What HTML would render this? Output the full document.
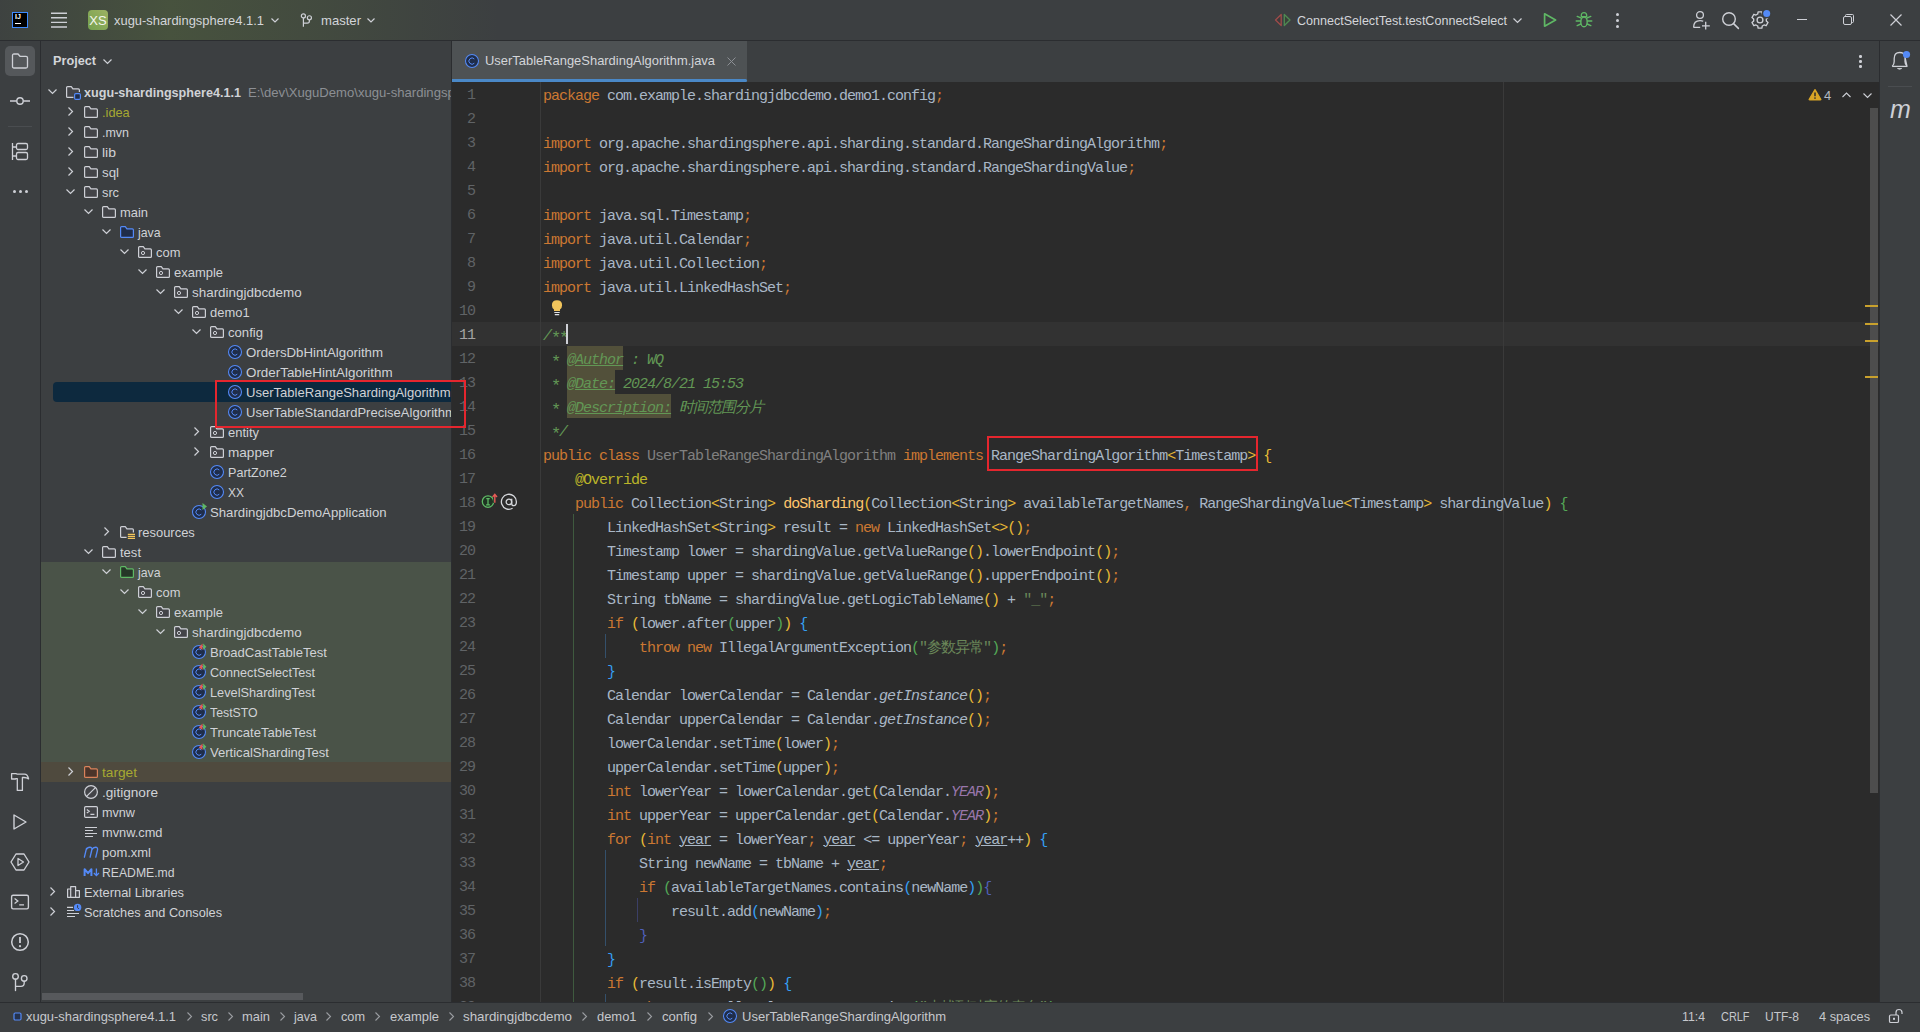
<!DOCTYPE html><html><head><meta charset="utf-8"><style>
*{margin:0;padding:0;box-sizing:border-box}
html,body{width:1920px;height:1032px;overflow:hidden;background:#3C3F41}
body{position:relative;font-family:"Liberation Sans",sans-serif;color:#BBBBBB;font-size:13px}
.a{position:absolute}
.t{position:absolute;white-space:pre;line-height:20px;font-size:13.3px;color:#C6C8CC}
svg{position:absolute;overflow:visible}
.code{position:absolute;left:543px;top:82px;font-family:"Liberation Mono",monospace;font-size:15px;letter-spacing:-1px;line-height:24px;white-space:pre;color:#A9B7C6}
.ln{position:absolute;left:450px;width:25px;text-align:right;font-family:"Liberation Mono",monospace;font-size:15px;letter-spacing:-1px;line-height:24px;color:#606366}
.k{color:#CC7832}.s{color:#6A8759}.d{color:#629755;font-style:italic}
.dt{color:#629755;font-style:italic;text-decoration:underline}
.an{color:#BBB529}.fn{color:#FFC66D}.gr{color:#808080}.st{color:#9876AA;font-style:italic}.it{font-style:italic}
.u{text-decoration:underline}
.ast{color:#629755;position:relative;top:3px;font-size:17px;line-height:0;letter-spacing:-2.2px}
.y{color:#E8BA36}.g{color:#54A857}.b{color:#359FF4}.i{color:#5060BB}
</style></head><body><div class="a" style="left:0;top:0;width:1920px;height:40px;background:linear-gradient(90deg, rgba(110,150,50,0.04) 0px, rgba(110,150,50,0.22) 170px, rgba(110,150,50,0.12) 330px, rgba(110,150,50,0) 500px),#3C3F41"></div>
<div class="a" style="left:0;top:40px;width:1920px;height:1px;background:#2B2D30"></div>
<div class="a" style="left:12px;top:12px;width:16px;height:16px;background:#000;border:1px solid #3D8BFF"></div>
<div class="a" style="left:15px;top:13px;font-size:7px;font-weight:bold;color:#fff;line-height:8px">IJ</div>
<div class="a" style="left:15px;top:23px;width:6px;height:1px;background:#fff"></div>
<svg style="left:51px;top:10px" width="16" height="20"><path d="M0 3.2 H16 M0 7.8 H16 M0 12.4 H16 M0 17 H16" stroke="#CED0D6" stroke-width="1.4"/></svg>
<div class="a" style="left:88px;top:10px;width:20px;height:20px;border-radius:4px;background:linear-gradient(45deg,#74A04F,#9DB262);color:#F4F7EE;font-size:13px;line-height:22px;text-align:center">XS</div>
<div class="a" style="left:114px;top:11px;white-space:pre;font-size:13px;line-height:20px;color:#D3D5D9;transform-origin:0 0;transform:scaleX(0.9931);">xugu-shardingsphere4.1.1</div>
<svg style="left:271px;top:18px" width="8" height="5.0"><path d="M0.5 0.5 L4.0 4.0 L7.5 0.5" fill="none" stroke="#CED0D6" stroke-width="1.2"/></svg>
<svg style="left:296px;top:10px" width="20" height="20"><circle cx="7.4" cy="5.9" r="2.05" fill="none" stroke="#CED0D6" stroke-width="1.2"/><circle cx="13.4" cy="7.8" r="2.05" fill="none" stroke="#CED0D6" stroke-width="1.2"/><path d="M7.4 8 V16.8 M13.4 9.9 V11 Q13.4 13.2 11.2 13.2 H7.4" fill="none" stroke="#CED0D6" stroke-width="1.2"/></svg>
<div class="a" style="left:321px;top:11px;white-space:pre;font-size:13px;line-height:20px;color:#D3D5D9;transform-origin:0 0;transform:scaleX(1.0068);">master</div>
<svg style="left:367px;top:18px" width="8" height="5.0"><path d="M0.5 0.5 L4.0 4.0 L7.5 0.5" fill="none" stroke="#CED0D6" stroke-width="1.2"/></svg>
<svg style="left:1274px;top:13px" width="18" height="14"><path d="M7.2 1.5 L1.5 7 L7.2 12.5 Z" fill="#3F3A3B" stroke="#9E4B4A" stroke-width="1.3" stroke-linejoin="round"/><path d="M10.3 1.5 L16 7 L10.3 12.5 Z" fill="#394239" stroke="#4F8A52" stroke-width="1.3" stroke-linejoin="round"/></svg>
<div class="a" style="left:1297px;top:11px;white-space:pre;font-size:13px;line-height:20px;color:#D3D5D9;transform-origin:0 0;transform:scaleX(0.9655);">ConnectSelectTest.testConnectSelect</div>
<svg style="left:1513px;top:18px" width="9" height="5.5"><path d="M0.5 0.5 L4.5 4.5 L8.5 0.5" fill="none" stroke="#CED0D6" stroke-width="1.2"/></svg>
<svg style="left:1543px;top:12px" width="14" height="16"><path d="M1.6 1.8 L12.6 8 L1.6 14.2 Z" fill="none" stroke="#5FB865" stroke-width="1.7" stroke-linejoin="round"/></svg>
<svg style="left:1574px;top:10px" width="20" height="20"><path d="M7.3 6.7 V5.6 Q7.3 2.7 10 2.7 Q12.7 2.7 12.7 5.6 V6.7 Z" fill="none" stroke="#5FB865" stroke-width="1.3" stroke-linejoin="round"/><ellipse cx="10" cy="11.9" rx="3.2" ry="4.9" fill="none" stroke="#5FB865" stroke-width="1.4"/><path d="M3.2 6.4 L6.8 7.9 M2.2 11 H6.6 M3.2 15.6 L6.8 14 M16.8 6.4 L13.2 7.9 M17.8 11 H13.4 M16.8 15.6 L13.2 14" fill="none" stroke="#5FB865" stroke-width="1.4" stroke-linecap="round"/></svg>
<div class="a" style="left:1616px;top:13px;width:3px;height:3px;border-radius:50%;background:#CED0D6"></div>
<div class="a" style="left:1616px;top:19px;width:3px;height:3px;border-radius:50%;background:#CED0D6"></div>
<div class="a" style="left:1616px;top:25px;width:3px;height:3px;border-radius:50%;background:#CED0D6"></div>
<svg style="left:1690px;top:9px" width="22" height="22"><circle cx="10" cy="6" r="3.4" fill="none" stroke="#CED0D6" stroke-width="1.3"/><path d="M3.6 18.4 Q3.6 11.6 10 11.6 Q12 11.6 13.2 12.3 M3.6 18.4 H10.2 M15.7 12.8 V20.6 M12 16.9 H19.8" fill="none" stroke="#CED0D6" stroke-width="1.3"/></svg>
<svg style="left:1719px;top:9px" width="22" height="22"><circle cx="10" cy="10" r="6.3" fill="none" stroke="#CED0D6" stroke-width="1.4"/><path d="M14.6 14.6 L19.4 19.4" stroke="#CED0D6" stroke-width="1.5" stroke-linecap="round"/></svg>
<svg style="left:1750px;top:10px" width="22" height="22"><path d="M8.11 1.82 L11.89 1.82 L12.29 4.03 L14.03 5.03 L16.14 4.27 L18.03 7.54 L16.32 9.00 L16.32 11.00 L18.03 12.46 L16.14 15.73 L14.03 14.97 L12.29 15.97 L11.89 18.18 L8.11 18.18 L7.71 15.97 L5.97 14.97 L3.86 15.73 L1.97 12.46 L3.68 11.00 L3.68 9.00 L1.97 7.54 L3.86 4.27 L5.97 5.03 L7.71 4.03 Z" fill="none" stroke="#CED0D6" stroke-width="1.35" stroke-linejoin="round"/><circle cx="10" cy="10" r="2.9" fill="none" stroke="#CED0D6" stroke-width="1.35"/><circle cx="16.7" cy="3.5" r="5" fill="#3C3F41"/><circle cx="16.7" cy="3.5" r="3.5" fill="#548AF7"/></svg>
<div class="a" style="left:1797px;top:19px;width:10px;height:1px;background:#CED0D6"></div>
<svg style="left:1843px;top:14px" width="12" height="12"><rect x="0.5" y="2.5" width="8" height="8" rx="1.5" fill="none" stroke="#CED0D6"/><path d="M2.5 2.5 V1.5 Q2.5 0.5 3.5 0.5 H9.5 Q10.5 0.5 10.5 1.5 V7.5 Q10.5 8.5 9.5 8.5 H8.5" fill="none" stroke="#CED0D6"/></svg>
<svg style="left:1890px;top:14px" width="12" height="12"><path d="M0.5 0.5 L11.5 11.5 M11.5 0.5 L0.5 11.5" stroke="#CED0D6" stroke-width="1.2"/></svg>
<div class="a" style="left:40px;top:41px;width:1px;height:962px;background:#2B2D30"></div>
<div class="a" style="left:5px;top:46px;width:30px;height:30px;border-radius:5px;background:#55585B"></div>
<svg style="left:11px;top:53px" width="18" height="16"><path d="M1.5 2.5 Q1.5 1 3 1 H7 L9 3.3 H15 Q16.5 3.3 16.5 4.8 V13.5 Q16.5 15 15 15 H3 Q1.5 15 1.5 13.5 Z" fill="none" stroke="#CED0D6" stroke-width="1.3"/></svg>
<svg style="left:10px;top:95px" width="20" height="12"><circle cx="10" cy="6" r="3.2" fill="none" stroke="#CED0D6" stroke-width="1.4"/><path d="M0 6 H6.8 M13.2 6 H20" stroke="#CED0D6" stroke-width="1.4"/></svg>
<div class="a" style="left:8px;top:126px;width:24px;height:1px;background:#4A4D50"></div>
<svg style="left:11px;top:142px" width="18" height="20"><path d="M1.5 1 V18 M1.5 5 H5 M1.5 14 H5" fill="none" stroke="#CED0D6" stroke-width="1.3"/><rect x="5.5" y="1.5" width="11" height="6" rx="1.5" fill="none" stroke="#CED0D6" stroke-width="1.3"/><rect x="5.5" y="10.5" width="11" height="7" rx="1.5" fill="none" stroke="#CED0D6" stroke-width="1.3"/></svg>
<div class="a" style="left:13px;top:190px;width:3px;height:3px;border-radius:50%;background:#CED0D6"></div>
<div class="a" style="left:19px;top:190px;width:3px;height:3px;border-radius:50%;background:#CED0D6"></div>
<div class="a" style="left:25px;top:190px;width:3px;height:3px;border-radius:50%;background:#CED0D6"></div>
<svg style="left:10px;top:772px" width="20" height="20"><path d="M1.6 1.6 H5.8 Q6.4 2.1 7.4 2.1 H14.4 Q17.6 2.1 18.6 6.9 Q16.8 5.5 14 5.5 H12.4 V18.4 H7.3 V6.6 H6 Q5.4 7 4.9 7 H1.6 Z" fill="none" stroke="#CED0D6" stroke-width="1.3" stroke-linejoin="round"/></svg>
<svg style="left:12px;top:813px" width="16" height="18"><path d="M2 2 L14 9 L2 16 Z" fill="none" stroke="#CED0D6" stroke-width="1.4" stroke-linejoin="round"/></svg>
<svg style="left:10px;top:853px" width="20" height="18"><path d="M6 1 H14 L19 9 L14 17 H6 L1 9 Z" fill="none" stroke="#CED0D6" stroke-width="1.4" stroke-linejoin="round"/><path d="M8 5.5 L13.5 9 L8 12.5 Z" fill="none" stroke="#CED0D6" stroke-width="1.3" stroke-linejoin="round"/></svg>
<svg style="left:10px;top:894px" width="20" height="16"><rect x="1.6" y="1.2" width="16.8" height="13.6" rx="1.5" fill="none" stroke="#CED0D6" stroke-width="1.35"/><path d="M4.6 4.6 L7.8 7 L4.6 9.4 M9.2 10.8 H14" fill="none" stroke="#CED0D6" stroke-width="1.3"/></svg>
<svg style="left:10px;top:932px" width="20" height="20"><circle cx="10" cy="10" r="8.3" fill="none" stroke="#CED0D6" stroke-width="1.5"/><path d="M10 5 V11" stroke="#CED0D6" stroke-width="1.8"/><circle cx="10" cy="14.2" r="1.1" fill="#CED0D6"/></svg>
<svg style="left:11px;top:972px" width="20" height="20"><circle cx="4.5" cy="4.4" r="2.8" fill="none" stroke="#CED0D6" stroke-width="1.35"/><circle cx="13.2" cy="6.4" r="2.8" fill="none" stroke="#CED0D6" stroke-width="1.35"/><path d="M4.5 7.2 V18.6 M13.2 9.2 V11 Q13.2 14.3 10 14.3 H4.5" fill="none" stroke="#CED0D6" stroke-width="1.35" stroke-linecap="round"/></svg>
<div class="a" style="left:53px;top:51px;white-space:pre;font-size:13px;line-height:20px;color:#D3D5D9;font-weight:bold;transform-origin:0 0;transform:scaleX(0.9757);">Project</div>
<svg style="left:103px;top:59px" width="9" height="5.5"><path d="M0.5 0.5 L4.5 4.5 L8.5 0.5" fill="none" stroke="#CED0D6" stroke-width="1.2"/></svg>
<div class="a" style="left:41px;top:562px;width:410px;height:200px;background:#4A5348"></div>
<div class="a" style="left:41px;top:762px;width:410px;height:20px;background:#4F4A3E"></div>
<div class="a" style="left:53px;top:382px;width:398px;height:20px;border-radius:4px 0 0 4px;background:#0D293E"></div>
<div class="a" style="left:0;top:82px;width:451px;height:921px;overflow:hidden"><div class="a" style="left:0;top:-82px;width:451px;height:1003px">
<svg style="left:48px;top:89px" width="9" height="5.5"><path d="M0.5 0.5 L4.5 4.5 L8.5 0.5" fill="none" stroke="#CED0D6" stroke-width="1.2"/></svg>
<svg style="left:66px;top:82px" width="16" height="20"><path d="M13.4 10 V7.9 Q13.4 6.9 12.4 6.9 H6.9 L5.3 4.6 H1.6 Q0.6 4.6 0.6 5.6 V14.4 Q0.6 15.4 1.6 15.4 H7.5" fill="#434448" stroke="#CED0D6" stroke-width="1.2" stroke-linejoin="round"/><rect x="8.6" y="11.6" width="5.8" height="5.8" rx="1.2" fill="#1F2D4A" stroke="#548AF7" stroke-width="1.2"/></svg>
<div class="a" style="left:84px;top:83px;white-space:pre;font-size:13px;line-height:20px;color:#D0D2D6;font-weight:bold;transform-origin:0 0;transform:scaleX(0.9702);">xugu-shardingsphere4.1.1</div>
<div class="a" style="left:248px;top:83px;white-space:pre;font-size:13px;line-height:20px;color:#8C8F94;transform-origin:0 0;transform:scaleX(1.0074);">E:\dev\XuguDemo\xugu-shardingsphere4.1.1</div>
<svg style="left:68px;top:107px" width="5.5" height="9"><path d="M0.5 0.5 L4.5 4.5 L0.5 8.5" fill="none" stroke="#CED0D6" stroke-width="1.2"/></svg>
<svg style="left:84px;top:102px" width="16" height="20"><path d="M0.6 5.6 Q0.6 4.6 1.6 4.6 H5.3 L6.9 6.9 H12.4 Q13.4 6.9 13.4 7.9 V14.4 Q13.4 15.4 12.4 15.4 H1.6 Q0.6 15.4 0.6 14.4 Z" fill="#434448" stroke="#CED0D6" stroke-width="1.2" stroke-linejoin="round"/></svg>
<div class="a" style="left:102px;top:103px;white-space:pre;font-size:13px;line-height:20px;color:#A6A832;transform-origin:0 0;transform:scaleX(0.9826);">.idea</div>
<svg style="left:68px;top:127px" width="5.5" height="9"><path d="M0.5 0.5 L4.5 4.5 L0.5 8.5" fill="none" stroke="#CED0D6" stroke-width="1.2"/></svg>
<svg style="left:84px;top:122px" width="16" height="20"><path d="M0.6 5.6 Q0.6 4.6 1.6 4.6 H5.3 L6.9 6.9 H12.4 Q13.4 6.9 13.4 7.9 V14.4 Q13.4 15.4 12.4 15.4 H1.6 Q0.6 15.4 0.6 14.4 Z" fill="#434448" stroke="#CED0D6" stroke-width="1.2" stroke-linejoin="round"/></svg>
<div class="a" style="left:102px;top:123px;white-space:pre;font-size:13px;line-height:20px;color:#D0D2D6;transform-origin:0 0;transform:scaleX(0.9584);">.mvn</div>
<svg style="left:68px;top:147px" width="5.5" height="9"><path d="M0.5 0.5 L4.5 4.5 L0.5 8.5" fill="none" stroke="#CED0D6" stroke-width="1.2"/></svg>
<svg style="left:84px;top:142px" width="16" height="20"><path d="M0.6 5.6 Q0.6 4.6 1.6 4.6 H5.3 L6.9 6.9 H12.4 Q13.4 6.9 13.4 7.9 V14.4 Q13.4 15.4 12.4 15.4 H1.6 Q0.6 15.4 0.6 14.4 Z" fill="#434448" stroke="#CED0D6" stroke-width="1.2" stroke-linejoin="round"/></svg>
<div class="a" style="left:102px;top:143px;white-space:pre;font-size:13px;line-height:20px;color:#D0D2D6;transform-origin:0 0;transform:scaleX(1.0764);">lib</div>
<svg style="left:68px;top:167px" width="5.5" height="9"><path d="M0.5 0.5 L4.5 4.5 L0.5 8.5" fill="none" stroke="#CED0D6" stroke-width="1.2"/></svg>
<svg style="left:84px;top:162px" width="16" height="20"><path d="M0.6 5.6 Q0.6 4.6 1.6 4.6 H5.3 L6.9 6.9 H12.4 Q13.4 6.9 13.4 7.9 V14.4 Q13.4 15.4 12.4 15.4 H1.6 Q0.6 15.4 0.6 14.4 Z" fill="#434448" stroke="#CED0D6" stroke-width="1.2" stroke-linejoin="round"/></svg>
<div class="a" style="left:102px;top:163px;white-space:pre;font-size:13px;line-height:20px;color:#D0D2D6;transform-origin:0 0;transform:scaleX(1.0230);">sql</div>
<svg style="left:66px;top:189px" width="9" height="5.5"><path d="M0.5 0.5 L4.5 4.5 L8.5 0.5" fill="none" stroke="#CED0D6" stroke-width="1.2"/></svg>
<svg style="left:84px;top:182px" width="16" height="20"><path d="M0.6 5.6 Q0.6 4.6 1.6 4.6 H5.3 L6.9 6.9 H12.4 Q13.4 6.9 13.4 7.9 V14.4 Q13.4 15.4 12.4 15.4 H1.6 Q0.6 15.4 0.6 14.4 Z" fill="#434448" stroke="#CED0D6" stroke-width="1.2" stroke-linejoin="round"/></svg>
<div class="a" style="left:102px;top:183px;white-space:pre;font-size:13px;line-height:20px;color:#D0D2D6;transform-origin:0 0;transform:scaleX(0.9810);">src</div>
<svg style="left:84px;top:209px" width="9" height="5.5"><path d="M0.5 0.5 L4.5 4.5 L8.5 0.5" fill="none" stroke="#CED0D6" stroke-width="1.2"/></svg>
<svg style="left:102px;top:202px" width="16" height="20"><path d="M0.6 5.6 Q0.6 4.6 1.6 4.6 H5.3 L6.9 6.9 H12.4 Q13.4 6.9 13.4 7.9 V14.4 Q13.4 15.4 12.4 15.4 H1.6 Q0.6 15.4 0.6 14.4 Z" fill="#434448" stroke="#CED0D6" stroke-width="1.2" stroke-linejoin="round"/></svg>
<div class="a" style="left:120px;top:203px;white-space:pre;font-size:13px;line-height:20px;color:#D0D2D6;transform-origin:0 0;transform:scaleX(0.9937);">main</div>
<svg style="left:102px;top:229px" width="9" height="5.5"><path d="M0.5 0.5 L4.5 4.5 L8.5 0.5" fill="none" stroke="#CED0D6" stroke-width="1.2"/></svg>
<svg style="left:120px;top:222px" width="16" height="20"><path d="M0.6 5.6 Q0.6 4.6 1.6 4.6 H5.3 L6.9 6.9 H12.4 Q13.4 6.9 13.4 7.9 V14.4 Q13.4 15.4 12.4 15.4 H1.6 Q0.6 15.4 0.6 14.4 Z" fill="#1F2D4A" stroke="#548AF7" stroke-width="1.2" stroke-linejoin="round"/></svg>
<div class="a" style="left:138px;top:223px;white-space:pre;font-size:13px;line-height:20px;color:#D0D2D6;transform-origin:0 0;transform:scaleX(0.9477);">java</div>
<svg style="left:120px;top:249px" width="9" height="5.5"><path d="M0.5 0.5 L4.5 4.5 L8.5 0.5" fill="none" stroke="#CED0D6" stroke-width="1.2"/></svg>
<svg style="left:138px;top:242px" width="16" height="20"><path d="M0.6 5.6 Q0.6 4.6 1.6 4.6 H5.3 L6.9 6.9 H12.4 Q13.4 6.9 13.4 7.9 V14.4 Q13.4 15.4 12.4 15.4 H1.6 Q0.6 15.4 0.6 14.4 Z" fill="#434448" stroke="#CED0D6" stroke-width="1.2" stroke-linejoin="round"/><circle cx="5" cy="11" r="1.6" fill="none" stroke="#CED0D6" stroke-width="1"/></svg>
<div class="a" style="left:156px;top:243px;white-space:pre;font-size:13px;line-height:20px;color:#D0D2D6;transform-origin:0 0;transform:scaleX(0.9935);">com</div>
<svg style="left:138px;top:269px" width="9" height="5.5"><path d="M0.5 0.5 L4.5 4.5 L8.5 0.5" fill="none" stroke="#CED0D6" stroke-width="1.2"/></svg>
<svg style="left:156px;top:262px" width="16" height="20"><path d="M0.6 5.6 Q0.6 4.6 1.6 4.6 H5.3 L6.9 6.9 H12.4 Q13.4 6.9 13.4 7.9 V14.4 Q13.4 15.4 12.4 15.4 H1.6 Q0.6 15.4 0.6 14.4 Z" fill="#434448" stroke="#CED0D6" stroke-width="1.2" stroke-linejoin="round"/><circle cx="5" cy="11" r="1.6" fill="none" stroke="#CED0D6" stroke-width="1"/></svg>
<div class="a" style="left:174px;top:263px;white-space:pre;font-size:13px;line-height:20px;color:#D0D2D6;transform-origin:0 0;transform:scaleX(0.9972);">example</div>
<svg style="left:156px;top:289px" width="9" height="5.5"><path d="M0.5 0.5 L4.5 4.5 L8.5 0.5" fill="none" stroke="#CED0D6" stroke-width="1.2"/></svg>
<svg style="left:174px;top:282px" width="16" height="20"><path d="M0.6 5.6 Q0.6 4.6 1.6 4.6 H5.3 L6.9 6.9 H12.4 Q13.4 6.9 13.4 7.9 V14.4 Q13.4 15.4 12.4 15.4 H1.6 Q0.6 15.4 0.6 14.4 Z" fill="#434448" stroke="#CED0D6" stroke-width="1.2" stroke-linejoin="round"/><circle cx="5" cy="11" r="1.6" fill="none" stroke="#CED0D6" stroke-width="1"/></svg>
<div class="a" style="left:192px;top:283px;white-space:pre;font-size:13px;line-height:20px;color:#D0D2D6;transform-origin:0 0;transform:scaleX(1.0326);">shardingjdbcdemo</div>
<svg style="left:174px;top:309px" width="9" height="5.5"><path d="M0.5 0.5 L4.5 4.5 L8.5 0.5" fill="none" stroke="#CED0D6" stroke-width="1.2"/></svg>
<svg style="left:192px;top:302px" width="16" height="20"><path d="M0.6 5.6 Q0.6 4.6 1.6 4.6 H5.3 L6.9 6.9 H12.4 Q13.4 6.9 13.4 7.9 V14.4 Q13.4 15.4 12.4 15.4 H1.6 Q0.6 15.4 0.6 14.4 Z" fill="#434448" stroke="#CED0D6" stroke-width="1.2" stroke-linejoin="round"/><circle cx="5" cy="11" r="1.6" fill="none" stroke="#CED0D6" stroke-width="1"/></svg>
<div class="a" style="left:210px;top:303px;white-space:pre;font-size:13px;line-height:20px;color:#D0D2D6;transform-origin:0 0;transform:scaleX(0.9963);">demo1</div>
<svg style="left:192px;top:329px" width="9" height="5.5"><path d="M0.5 0.5 L4.5 4.5 L8.5 0.5" fill="none" stroke="#CED0D6" stroke-width="1.2"/></svg>
<svg style="left:210px;top:322px" width="16" height="20"><path d="M0.6 5.6 Q0.6 4.6 1.6 4.6 H5.3 L6.9 6.9 H12.4 Q13.4 6.9 13.4 7.9 V14.4 Q13.4 15.4 12.4 15.4 H1.6 Q0.6 15.4 0.6 14.4 Z" fill="#434448" stroke="#CED0D6" stroke-width="1.2" stroke-linejoin="round"/><circle cx="5" cy="11" r="1.6" fill="none" stroke="#CED0D6" stroke-width="1"/></svg>
<div class="a" style="left:228px;top:323px;white-space:pre;font-size:13px;line-height:20px;color:#D0D2D6;transform-origin:0 0;transform:scaleX(1.0089);">config</div>
<svg style="left:228px;top:342px" width="16" height="20"><circle cx="7" cy="10" r="6.5" fill="#1F2D4A" stroke="#548AF7" stroke-width="1.05"/><path d="M9.3 8 A3.1 3.1 0 1 0 9.3 12.2" fill="none" stroke="#548AF7" stroke-width="1"/></svg>
<div class="a" style="left:246px;top:343px;white-space:pre;font-size:13px;line-height:20px;color:#D0D2D6;transform-origin:0 0;transform:scaleX(1.0195);">OrdersDbHintAlgorithm</div>
<svg style="left:228px;top:362px" width="16" height="20"><circle cx="7" cy="10" r="6.5" fill="#1F2D4A" stroke="#548AF7" stroke-width="1.05"/><path d="M9.3 8 A3.1 3.1 0 1 0 9.3 12.2" fill="none" stroke="#548AF7" stroke-width="1"/></svg>
<div class="a" style="left:246px;top:363px;white-space:pre;font-size:13px;line-height:20px;color:#D0D2D6;transform-origin:0 0;transform:scaleX(1.0300);">OrderTableHintAlgorithm</div>
<svg style="left:228px;top:382px" width="16" height="20"><circle cx="7" cy="10" r="6.5" fill="#1F2D4A" stroke="#548AF7" stroke-width="1.05"/><path d="M9.3 8 A3.1 3.1 0 1 0 9.3 12.2" fill="none" stroke="#548AF7" stroke-width="1"/></svg>
<div class="a" style="left:246px;top:383px;white-space:pre;font-size:13px;line-height:20px;color:#D0D2D6;transform-origin:0 0;transform:scaleX(1.0035);">UserTableRangeShardingAlgorithm</div>
<svg style="left:228px;top:402px" width="16" height="20"><circle cx="7" cy="10" r="6.5" fill="#1F2D4A" stroke="#548AF7" stroke-width="1.05"/><path d="M9.3 8 A3.1 3.1 0 1 0 9.3 12.2" fill="none" stroke="#548AF7" stroke-width="1"/></svg>
<div class="a" style="left:246px;top:403px;white-space:pre;font-size:13px;line-height:20px;color:#D0D2D6;transform-origin:0 0;transform:scaleX(1.0012);">UserTableStandardPreciseAlgorithm</div>
<svg style="left:194px;top:427px" width="5.5" height="9"><path d="M0.5 0.5 L4.5 4.5 L0.5 8.5" fill="none" stroke="#CED0D6" stroke-width="1.2"/></svg>
<svg style="left:210px;top:422px" width="16" height="20"><path d="M0.6 5.6 Q0.6 4.6 1.6 4.6 H5.3 L6.9 6.9 H12.4 Q13.4 6.9 13.4 7.9 V14.4 Q13.4 15.4 12.4 15.4 H1.6 Q0.6 15.4 0.6 14.4 Z" fill="#434448" stroke="#CED0D6" stroke-width="1.2" stroke-linejoin="round"/><circle cx="5" cy="11" r="1.6" fill="none" stroke="#CED0D6" stroke-width="1"/></svg>
<div class="a" style="left:228px;top:423px;white-space:pre;font-size:13px;line-height:20px;color:#D0D2D6;transform-origin:0 0;transform:scaleX(0.9977);">entity</div>
<svg style="left:194px;top:447px" width="5.5" height="9"><path d="M0.5 0.5 L4.5 4.5 L0.5 8.5" fill="none" stroke="#CED0D6" stroke-width="1.2"/></svg>
<svg style="left:210px;top:442px" width="16" height="20"><path d="M0.6 5.6 Q0.6 4.6 1.6 4.6 H5.3 L6.9 6.9 H12.4 Q13.4 6.9 13.4 7.9 V14.4 Q13.4 15.4 12.4 15.4 H1.6 Q0.6 15.4 0.6 14.4 Z" fill="#434448" stroke="#CED0D6" stroke-width="1.2" stroke-linejoin="round"/><circle cx="5" cy="11" r="1.6" fill="none" stroke="#CED0D6" stroke-width="1"/></svg>
<div class="a" style="left:228px;top:443px;white-space:pre;font-size:13px;line-height:20px;color:#D0D2D6;transform-origin:0 0;transform:scaleX(1.0436);">mapper</div>
<svg style="left:210px;top:462px" width="16" height="20"><circle cx="7" cy="10" r="6.5" fill="#1F2D4A" stroke="#548AF7" stroke-width="1.05"/><path d="M9.3 8 A3.1 3.1 0 1 0 9.3 12.2" fill="none" stroke="#548AF7" stroke-width="1"/></svg>
<div class="a" style="left:228px;top:463px;white-space:pre;font-size:13px;line-height:20px;color:#D0D2D6;transform-origin:0 0;transform:scaleX(0.9687);">PartZone2</div>
<svg style="left:210px;top:482px" width="16" height="20"><circle cx="7" cy="10" r="6.5" fill="#1F2D4A" stroke="#548AF7" stroke-width="1.05"/><path d="M9.3 8 A3.1 3.1 0 1 0 9.3 12.2" fill="none" stroke="#548AF7" stroke-width="1"/></svg>
<div class="a" style="left:228px;top:483px;white-space:pre;font-size:13px;line-height:20px;color:#D0D2D6;transform-origin:0 0;transform:scaleX(0.9226);">XX</div>
<svg style="left:192px;top:502px" width="16" height="20"><circle cx="7" cy="10" r="6.5" fill="#1F2D4A" stroke="#548AF7" stroke-width="1.05"/><path d="M9.3 8 A3.1 3.1 0 1 0 9.3 12.2" fill="none" stroke="#548AF7" stroke-width="1"/><path d="M10.5 1 L10.5 8 L15 4.5 Z" fill="#5FB865"/></svg>
<div class="a" style="left:210px;top:503px;white-space:pre;font-size:13px;line-height:20px;color:#D0D2D6;transform-origin:0 0;transform:scaleX(1.0140);">ShardingjdbcDemoApplication</div>
<svg style="left:104px;top:527px" width="5.5" height="9"><path d="M0.5 0.5 L4.5 4.5 L0.5 8.5" fill="none" stroke="#CED0D6" stroke-width="1.2"/></svg>
<svg style="left:120px;top:522px" width="16" height="20"><path d="M1 5 H5.2 L6.8 7.3 H13 V11 H6.6 V15 H1 Z" fill="#434448"/><path d="M13.4 10.4 V7.9 Q13.4 6.9 12.4 6.9 H6.9 L5.3 4.6 H1.6 Q0.6 4.6 0.6 5.6 V14.4 Q0.6 15.4 1.6 15.4 H6.6" fill="none" stroke="#CED0D6" stroke-width="1.2" stroke-linejoin="round"/><path d="M7.8 12.4 H15 M7.8 14.4 H15 M7.8 16.4 H15" stroke="#F2C55C" stroke-width="1.1"/></svg>
<div class="a" style="left:138px;top:523px;white-space:pre;font-size:13px;line-height:20px;color:#D0D2D6;transform-origin:0 0;transform:scaleX(0.9951);">resources</div>
<svg style="left:84px;top:549px" width="9" height="5.5"><path d="M0.5 0.5 L4.5 4.5 L8.5 0.5" fill="none" stroke="#CED0D6" stroke-width="1.2"/></svg>
<svg style="left:102px;top:542px" width="16" height="20"><path d="M0.6 5.6 Q0.6 4.6 1.6 4.6 H5.3 L6.9 6.9 H12.4 Q13.4 6.9 13.4 7.9 V14.4 Q13.4 15.4 12.4 15.4 H1.6 Q0.6 15.4 0.6 14.4 Z" fill="#434448" stroke="#CED0D6" stroke-width="1.2" stroke-linejoin="round"/></svg>
<div class="a" style="left:120px;top:543px;white-space:pre;font-size:13px;line-height:20px;color:#D0D2D6;transform-origin:0 0;transform:scaleX(1.0022);">test</div>
<svg style="left:102px;top:569px" width="9" height="5.5"><path d="M0.5 0.5 L4.5 4.5 L8.5 0.5" fill="none" stroke="#CED0D6" stroke-width="1.2"/></svg>
<svg style="left:120px;top:562px" width="16" height="20"><path d="M0.6 5.6 Q0.6 4.6 1.6 4.6 H5.3 L6.9 6.9 H12.4 Q13.4 6.9 13.4 7.9 V14.4 Q13.4 15.4 12.4 15.4 H1.6 Q0.6 15.4 0.6 14.4 Z" fill="#253627" stroke="#5FB865" stroke-width="1.2" stroke-linejoin="round"/></svg>
<div class="a" style="left:138px;top:563px;white-space:pre;font-size:13px;line-height:20px;color:#D0D2D6;transform-origin:0 0;transform:scaleX(0.9477);">java</div>
<svg style="left:120px;top:589px" width="9" height="5.5"><path d="M0.5 0.5 L4.5 4.5 L8.5 0.5" fill="none" stroke="#CED0D6" stroke-width="1.2"/></svg>
<svg style="left:138px;top:582px" width="16" height="20"><path d="M0.6 5.6 Q0.6 4.6 1.6 4.6 H5.3 L6.9 6.9 H12.4 Q13.4 6.9 13.4 7.9 V14.4 Q13.4 15.4 12.4 15.4 H1.6 Q0.6 15.4 0.6 14.4 Z" fill="#434448" stroke="#CED0D6" stroke-width="1.2" stroke-linejoin="round"/><circle cx="5" cy="11" r="1.6" fill="none" stroke="#CED0D6" stroke-width="1"/></svg>
<div class="a" style="left:156px;top:583px;white-space:pre;font-size:13px;line-height:20px;color:#D0D2D6;transform-origin:0 0;transform:scaleX(0.9935);">com</div>
<svg style="left:138px;top:609px" width="9" height="5.5"><path d="M0.5 0.5 L4.5 4.5 L8.5 0.5" fill="none" stroke="#CED0D6" stroke-width="1.2"/></svg>
<svg style="left:156px;top:602px" width="16" height="20"><path d="M0.6 5.6 Q0.6 4.6 1.6 4.6 H5.3 L6.9 6.9 H12.4 Q13.4 6.9 13.4 7.9 V14.4 Q13.4 15.4 12.4 15.4 H1.6 Q0.6 15.4 0.6 14.4 Z" fill="#434448" stroke="#CED0D6" stroke-width="1.2" stroke-linejoin="round"/><circle cx="5" cy="11" r="1.6" fill="none" stroke="#CED0D6" stroke-width="1"/></svg>
<div class="a" style="left:174px;top:603px;white-space:pre;font-size:13px;line-height:20px;color:#D0D2D6;transform-origin:0 0;transform:scaleX(0.9972);">example</div>
<svg style="left:156px;top:629px" width="9" height="5.5"><path d="M0.5 0.5 L4.5 4.5 L8.5 0.5" fill="none" stroke="#CED0D6" stroke-width="1.2"/></svg>
<svg style="left:174px;top:622px" width="16" height="20"><path d="M0.6 5.6 Q0.6 4.6 1.6 4.6 H5.3 L6.9 6.9 H12.4 Q13.4 6.9 13.4 7.9 V14.4 Q13.4 15.4 12.4 15.4 H1.6 Q0.6 15.4 0.6 14.4 Z" fill="#434448" stroke="#CED0D6" stroke-width="1.2" stroke-linejoin="round"/><circle cx="5" cy="11" r="1.6" fill="none" stroke="#CED0D6" stroke-width="1"/></svg>
<div class="a" style="left:192px;top:623px;white-space:pre;font-size:13px;line-height:20px;color:#D0D2D6;transform-origin:0 0;transform:scaleX(1.0326);">shardingjdbcdemo</div>
<svg style="left:192px;top:642px" width="16" height="20"><circle cx="7" cy="10" r="6.5" fill="#1F2D4A" stroke="#548AF7" stroke-width="1.05"/><path d="M9.3 8 A3.1 3.1 0 1 0 9.3 12.2" fill="none" stroke="#548AF7" stroke-width="1"/><path d="M10.5 1.5 L10.5 8 L6.8 5.5 Z" fill="#E55B55"/><path d="M11.2 1.5 L11.2 8 L14.3 4.8 Z" fill="#5FB865"/></svg>
<div class="a" style="left:210px;top:643px;white-space:pre;font-size:13px;line-height:20px;color:#D0D2D6;transform-origin:0 0;transform:scaleX(1.0048);">BroadCastTableTest</div>
<svg style="left:192px;top:662px" width="16" height="20"><circle cx="7" cy="10" r="6.5" fill="#1F2D4A" stroke="#548AF7" stroke-width="1.05"/><path d="M9.3 8 A3.1 3.1 0 1 0 9.3 12.2" fill="none" stroke="#548AF7" stroke-width="1"/><path d="M10.5 1.5 L10.5 8 L6.8 5.5 Z" fill="#E55B55"/><path d="M11.2 1.5 L11.2 8 L14.3 4.8 Z" fill="#5FB865"/></svg>
<div class="a" style="left:210px;top:663px;white-space:pre;font-size:13px;line-height:20px;color:#D0D2D6;transform-origin:0 0;transform:scaleX(0.9687);">ConnectSelectTest</div>
<svg style="left:192px;top:682px" width="16" height="20"><circle cx="7" cy="10" r="6.5" fill="#1F2D4A" stroke="#548AF7" stroke-width="1.05"/><path d="M9.3 8 A3.1 3.1 0 1 0 9.3 12.2" fill="none" stroke="#548AF7" stroke-width="1"/><path d="M10.5 1.5 L10.5 8 L6.8 5.5 Z" fill="#E55B55"/><path d="M11.2 1.5 L11.2 8 L14.3 4.8 Z" fill="#5FB865"/></svg>
<div class="a" style="left:210px;top:683px;white-space:pre;font-size:13px;line-height:20px;color:#D0D2D6;transform-origin:0 0;transform:scaleX(0.9817);">LevelShardingTest</div>
<svg style="left:192px;top:702px" width="16" height="20"><circle cx="7" cy="10" r="6.5" fill="#1F2D4A" stroke="#548AF7" stroke-width="1.05"/><path d="M9.3 8 A3.1 3.1 0 1 0 9.3 12.2" fill="none" stroke="#548AF7" stroke-width="1"/><path d="M10.5 1.5 L10.5 8 L6.8 5.5 Z" fill="#E55B55"/><path d="M11.2 1.5 L11.2 8 L14.3 4.8 Z" fill="#5FB865"/></svg>
<div class="a" style="left:210px;top:703px;white-space:pre;font-size:13px;line-height:20px;color:#D0D2D6;transform-origin:0 0;transform:scaleX(0.9477);">TestSTO</div>
<svg style="left:192px;top:722px" width="16" height="20"><circle cx="7" cy="10" r="6.5" fill="#1F2D4A" stroke="#548AF7" stroke-width="1.05"/><path d="M9.3 8 A3.1 3.1 0 1 0 9.3 12.2" fill="none" stroke="#548AF7" stroke-width="1"/><path d="M10.5 1.5 L10.5 8 L6.8 5.5 Z" fill="#E55B55"/><path d="M11.2 1.5 L11.2 8 L14.3 4.8 Z" fill="#5FB865"/></svg>
<div class="a" style="left:210px;top:723px;white-space:pre;font-size:13px;line-height:20px;color:#D0D2D6;transform-origin:0 0;transform:scaleX(1.0025);">TruncateTableTest</div>
<svg style="left:192px;top:742px" width="16" height="20"><circle cx="7" cy="10" r="6.5" fill="#1F2D4A" stroke="#548AF7" stroke-width="1.05"/><path d="M9.3 8 A3.1 3.1 0 1 0 9.3 12.2" fill="none" stroke="#548AF7" stroke-width="1"/><path d="M10.5 1.5 L10.5 8 L6.8 5.5 Z" fill="#E55B55"/><path d="M11.2 1.5 L11.2 8 L14.3 4.8 Z" fill="#5FB865"/></svg>
<div class="a" style="left:210px;top:743px;white-space:pre;font-size:13px;line-height:20px;color:#D0D2D6;transform-origin:0 0;transform:scaleX(1.0041);">VerticalShardingTest</div>
<svg style="left:68px;top:767px" width="5.5" height="9"><path d="M0.5 0.5 L4.5 4.5 L0.5 8.5" fill="none" stroke="#CED0D6" stroke-width="1.2"/></svg>
<svg style="left:84px;top:762px" width="16" height="20"><path d="M0.6 5.6 Q0.6 4.6 1.6 4.6 H5.3 L6.9 6.9 H12.4 Q13.4 6.9 13.4 7.9 V14.4 Q13.4 15.4 12.4 15.4 H1.6 Q0.6 15.4 0.6 14.4 Z" fill="#4B342A" stroke="#D9825B" stroke-width="1.2" stroke-linejoin="round"/></svg>
<div class="a" style="left:102px;top:763px;white-space:pre;font-size:13px;line-height:20px;color:#A6A832;transform-origin:0 0;transform:scaleX(1.0529);">target</div>
<svg style="left:84px;top:782px" width="16" height="20"><circle cx="7" cy="10" r="6.4" fill="#434448" stroke="#CED0D6" stroke-width="1.2"/><path d="M2.8 14.2 L11.2 5.8" stroke="#CED0D6" stroke-width="1.2"/></svg>
<div class="a" style="left:102px;top:783px;white-space:pre;font-size:13px;line-height:20px;color:#D0D2D6;transform-origin:0 0;transform:scaleX(1.0471);">.gitignore</div>
<svg style="left:84px;top:802px" width="16" height="20"><rect x="0.6" y="4.6" width="12.8" height="10.8" rx="1.2" fill="#434448" stroke="#CED0D6" stroke-width="1.2"/><path d="M2.8 7.6 L5.2 9.3 L2.8 11 M6.4 12.4 H10.4" fill="none" stroke="#CED0D6" stroke-width="1.2"/></svg>
<div class="a" style="left:102px;top:803px;white-space:pre;font-size:13px;line-height:20px;color:#D0D2D6;transform-origin:0 0;transform:scaleX(0.9721);">mvnw</div>
<svg style="left:84px;top:822px" width="16" height="20"><path d="M1 5.5 H13 M1 8.5 H9 M1 11.5 H13 M1 14.5 H9" stroke="#CED0D6" stroke-width="1.2"/></svg>
<div class="a" style="left:102px;top:823px;white-space:pre;font-size:13px;line-height:20px;color:#D0D2D6;transform-origin:0 0;transform:scaleX(0.9853);">mvnw.cmd</div>
<svg style="left:83px;top:846px" width="18" height="14"><path d="M1.4 11.2 L3.5 2.4 M3.2 3.8 C4 2 5.4 1.2 6.8 1.2 C8.6 1.2 9.2 2.4 8.8 4 L7.1 11.2 M8.9 3.6 C9.7 2 11.1 1.2 12.5 1.2 C14.3 1.2 14.9 2.4 14.5 4 L12.8 11.2" fill="none" stroke="#548AF7" stroke-width="1.35" stroke-linecap="round" stroke-linejoin="round"/></svg>
<div class="a" style="left:102px;top:843px;white-space:pre;font-size:13px;line-height:20px;color:#D0D2D6;transform-origin:0 0;transform:scaleX(0.9976);">pom.xml</div>
<svg style="left:83px;top:862px" width="18" height="20"><path d="M1.6 14 V7.2 L5 11.2 L8.4 7.2 V14" fill="none" stroke="#548AF7" stroke-width="2" stroke-linejoin="round"/><path d="M13.4 6.4 V13.4 M10.9 11 L13.4 13.6 L15.9 11" fill="none" stroke="#548AF7" stroke-width="1.3"/></svg>
<div class="a" style="left:102px;top:863px;white-space:pre;font-size:13px;line-height:20px;color:#D0D2D6;transform-origin:0 0;transform:scaleX(0.9380);">README.md</div>
<svg style="left:50px;top:887px" width="5.5" height="9"><path d="M0.5 0.5 L4.5 4.5 L0.5 8.5" fill="none" stroke="#CED0D6" stroke-width="1.2"/></svg>
<svg style="left:66px;top:882px" width="16" height="20"><path d="M1.6 15.3 V7 H4.7 V4.7 H9.6 V8.6 H13.4 V15.3 Z" fill="#434448" stroke="#CED0D6" stroke-width="1.2" stroke-linejoin="round"/><path d="M4.7 7 V15.3 M9.6 8.6 V15.3" stroke="#CED0D6" stroke-width="1.2"/></svg>
<div class="a" style="left:84px;top:883px;white-space:pre;font-size:13px;line-height:20px;color:#D0D2D6;transform-origin:0 0;transform:scaleX(0.9886);">External Libraries</div>
<svg style="left:50px;top:907px" width="5.5" height="9"><path d="M0.5 0.5 L4.5 4.5 L0.5 8.5" fill="none" stroke="#CED0D6" stroke-width="1.2"/></svg>
<svg style="left:66px;top:902px" width="16" height="20"><path d="M1 5.4 H7 M1 8.5 H8 M1 11.5 H13 M1 14.5 H9" stroke="#CED0D6" stroke-width="1.2"/><circle cx="11.6" cy="5.4" r="3.7" fill="#548AF7"/><path d="M11.6 3.2 V5.7 L12.8 6.9" fill="none" stroke="#2B2D30" stroke-width="0.9"/></svg>
<div class="a" style="left:84px;top:903px;white-space:pre;font-size:13px;line-height:20px;color:#D0D2D6;transform-origin:0 0;transform:scaleX(0.9793);">Scratches and Consoles</div>
</div></div>
<div class="a" style="left:42px;top:993px;width:261px;height:7px;background:#57595C"></div>
<div class="a" style="left:451px;top:41px;width:1px;height:962px;background:#2B2D30"></div>
<div class="a" style="left:452px;top:41px;width:1427px;height:41px;background:#3C3F41"></div>
<div class="a" style="left:452px;top:41px;width:295px;height:41px;background:#4E5254"></div>
<div class="a" style="left:452px;top:79px;width:295px;height:3px;border-radius:0 2px 2px 0;background:#4A88C7"></div>
<svg style="left:465px;top:51px" width="16" height="20"><circle cx="7" cy="10" r="6.5" fill="#1F2D4A" stroke="#548AF7" stroke-width="1.05"/><path d="M9.3 8 A3.1 3.1 0 1 0 9.3 12.2" fill="none" stroke="#548AF7" stroke-width="1"/></svg>
<div class="a" style="left:485px;top:51px;white-space:pre;font-size:13px;line-height:20px;color:#D3D5D9;transform-origin:0 0;transform:scaleX(0.9946);">UserTableRangeShardingAlgorithm.java</div>
<svg style="left:727px;top:57px" width="9" height="9"><path d="M0.5 0.5 L8.5 8.5 M8.5 0.5 L0.5 8.5" stroke="#8C8F94" stroke-width="1"/></svg>
<div class="a" style="left:1859px;top:55px;width:2.5px;height:2.5px;border-radius:50%;background:#CED0D6"></div>
<div class="a" style="left:1859px;top:60px;width:2.5px;height:2.5px;border-radius:50%;background:#CED0D6"></div>
<div class="a" style="left:1859px;top:65px;width:2.5px;height:2.5px;border-radius:50%;background:#CED0D6"></div>
<div class="a" style="left:452px;top:82px;width:1427px;height:921px;background:#2B2B2B"></div>
<div class="a" style="left:452px;top:322px;width:1427px;height:24px;background:#323232"></div>
<div class="a" style="left:567px;top:346px;width:56px;height:24px;background:#52503A"></div>
<div class="a" style="left:567px;top:370px;width:48px;height:24px;background:#52503A"></div>
<div class="a" style="left:567px;top:394px;width:104px;height:24px;background:#52503A"></div>
<div class="a" style="left:540px;top:82px;width:1px;height:921px;background:#3A3A3A"></div>
<div class="a" style="left:1503px;top:82px;width:1px;height:921px;background:#3A3A3A"></div>
<div class="ln" style="top:83.5px;color:#606366">1</div><div class="ln" style="top:107.5px;color:#606366">2</div><div class="ln" style="top:131.5px;color:#606366">3</div><div class="ln" style="top:155.5px;color:#606366">4</div><div class="ln" style="top:179.5px;color:#606366">5</div><div class="ln" style="top:203.5px;color:#606366">6</div><div class="ln" style="top:227.5px;color:#606366">7</div><div class="ln" style="top:251.5px;color:#606366">8</div><div class="ln" style="top:275.5px;color:#606366">9</div><div class="ln" style="top:299.5px;color:#606366">10</div><div class="ln" style="top:323.5px;color:#A4A3A3">11</div><div class="ln" style="top:347.5px;color:#606366">12</div><div class="ln" style="top:371.5px;color:#606366">13</div><div class="ln" style="top:395.5px;color:#606366">14</div><div class="ln" style="top:419.5px;color:#606366">15</div><div class="ln" style="top:443.5px;color:#606366">16</div><div class="ln" style="top:467.5px;color:#606366">17</div><div class="ln" style="top:491.5px;color:#606366">18</div><div class="ln" style="top:515.5px;color:#606366">19</div><div class="ln" style="top:539.5px;color:#606366">20</div><div class="ln" style="top:563.5px;color:#606366">21</div><div class="ln" style="top:587.5px;color:#606366">22</div><div class="ln" style="top:611.5px;color:#606366">23</div><div class="ln" style="top:635.5px;color:#606366">24</div><div class="ln" style="top:659.5px;color:#606366">25</div><div class="ln" style="top:683.5px;color:#606366">26</div><div class="ln" style="top:707.5px;color:#606366">27</div><div class="ln" style="top:731.5px;color:#606366">28</div><div class="ln" style="top:755.5px;color:#606366">29</div><div class="ln" style="top:779.5px;color:#606366">30</div><div class="ln" style="top:803.5px;color:#606366">31</div><div class="ln" style="top:827.5px;color:#606366">32</div><div class="ln" style="top:851.5px;color:#606366">33</div><div class="ln" style="top:875.5px;color:#606366">34</div><div class="ln" style="top:899.5px;color:#606366">35</div><div class="ln" style="top:923.5px;color:#606366">36</div><div class="ln" style="top:947.5px;color:#606366">37</div><div class="ln" style="top:971.5px;color:#606366">38</div><div class="ln" style="top:995.5px;color:#606366">39</div>
<div class="a" style="left:573px;top:514px;width:1px;height:504px;background:#3F5A3F"></div>
<div class="a" style="left:605px;top:634px;width:1px;height:24px;background:#34506B"></div>
<div class="a" style="left:605px;top:850px;width:1px;height:96px;background:#34506B"></div>
<div class="a" style="left:637px;top:898px;width:1px;height:24px;background:#3B3F66"></div>
<div class="a" style="left:605px;top:994px;width:1px;height:24px;background:#34506B"></div>
<div class="a" style="left:452px;top:82px;width:1427px;height:921px;overflow:hidden"><div class="code" style="left:91px;top:2.5px"><span class="k">package</span> com.example.shardingjdbcdemo.demo1.config<span class="k">;</span>

<span class="k">import</span> org.apache.shardingsphere.api.sharding.standard.RangeShardingAlgorithm<span class="k">;</span>
<span class="k">import</span> org.apache.shardingsphere.api.sharding.standard.RangeShardingValue<span class="k">;</span>

<span class="k">import</span> java.sql.Timestamp<span class="k">;</span>
<span class="k">import</span> java.util.Calendar<span class="k">;</span>
<span class="k">import</span> java.util.Collection<span class="k">;</span>
<span class="k">import</span> java.util.LinkedHashSet<span class="k">;</span>

<span class="d">/</span><span class="ast">**</span>
<span class="d"> </span><span class="ast">*</span><span class="d"> </span><span class="dt">@Author</span><span class="d"> : WQ</span>
<span class="d"> </span><span class="ast">*</span><span class="d"> </span><span class="dt">@Date:</span><span class="d"> 2024/8/21 15:53</span>
<span class="d"> </span><span class="ast">*</span><span class="d"> </span><span class="dt">@Description:</span><span class="d"> 时间范围分片</span>
<span class="d"> </span><span class="ast">*</span><span class="d">/</span>
<span class="k">public class </span><span class="gr">UserTableRangeShardingAlgorithm</span><span class="k"> implements </span>RangeShardingAlgorithm<span class="y">&lt;</span>Timestamp<span class="y">&gt;</span> <span class="y">{</span>
    <span class="an">@Override</span>
    <span class="k">public</span> Collection<span class="y">&lt;</span>String<span class="y">&gt;</span> <span class="fn">doSharding</span><span class="y">(</span>Collection<span class="y">&lt;</span>String<span class="y">&gt;</span> availableTargetNames<span class="k">,</span> RangeShardingValue<span class="y">&lt;</span>Timestamp<span class="y">&gt;</span> shardingValue<span class="y">)</span> <span class="g">{</span>
        LinkedHashSet<span class="y">&lt;</span>String<span class="y">&gt;</span> result = <span class="k">new</span> LinkedHashSet<span class="y">&lt;&gt;</span><span class="y">()</span><span class="k">;</span>
        Timestamp lower = shardingValue.getValueRange<span class="y">()</span>.lowerEndpoint<span class="y">()</span><span class="k">;</span>
        Timestamp upper = shardingValue.getValueRange<span class="y">()</span>.upperEndpoint<span class="y">()</span><span class="k">;</span>
        String tbName = shardingValue.getLogicTableName<span class="y">()</span> + <span class="s">&quot;_&quot;</span><span class="k">;</span>
        <span class="k">if</span> <span class="y">(</span>lower.after<span class="g">(</span>upper<span class="g">)</span><span class="y">)</span> <span class="b">{</span>
            <span class="k">throw new</span> IllegalArgumentException<span class="g">(</span><span class="s">&quot;参数异常&quot;</span><span class="g">)</span><span class="k">;</span>
        <span class="b">}</span>
        Calendar lowerCalendar = Calendar.<span class="it">getInstance</span><span class="y">()</span><span class="k">;</span>
        Calendar upperCalendar = Calendar.<span class="it">getInstance</span><span class="y">()</span><span class="k">;</span>
        lowerCalendar.setTime<span class="y">(</span>lower<span class="y">)</span><span class="k">;</span>
        upperCalendar.setTime<span class="y">(</span>upper<span class="y">)</span><span class="k">;</span>
        <span class="k">int</span> lowerYear = lowerCalendar.get<span class="y">(</span>Calendar.<span class="st">YEAR</span><span class="y">)</span><span class="k">;</span>
        <span class="k">int</span> upperYear = upperCalendar.get<span class="y">(</span>Calendar.<span class="st">YEAR</span><span class="y">)</span><span class="k">;</span>
        <span class="k">for</span> <span class="y">(</span><span class="k">int</span> <span class="u">year</span> = lowerYear<span class="k">;</span> <span class="u">year</span> &lt;= upperYear<span class="k">;</span> <span class="u">year</span>++<span class="y">)</span> <span class="b">{</span>
            String newName = tbName + <span class="u">year</span><span class="k">;</span>
            <span class="k">if</span> <span class="g">(</span>availableTargetNames.contains<span class="b">(</span>newName<span class="b">)</span><span class="g">)</span><span class="i">{</span>
                result.add<span class="b">(</span>newName<span class="b">)</span><span class="k">;</span>
            <span class="i">}</span>
        <span class="b">}</span>
        <span class="k">if</span> <span class="y">(</span>result.isEmpty<span class="g">()</span><span class="y">)</span> <span class="b">{</span>
            <span class="k">throw new</span> IllegalArgumentException<span class="g">(</span><span class="s">&quot;未找到对应的表名&quot;</span><span class="g">)</span><span class="k">;</span></div></div>
<div class="a" style="left:566px;top:324px;width:2px;height:20px;background:#CED0D6"></div>
<svg style="left:550px;top:299px" width="14" height="18"><path d="M7 1.2 Q12.1 1.2 12.1 6.2 Q12.1 8.8 10 10.6 V12 H4 V10.6 Q1.9 8.8 1.9 6.2 Q1.9 1.2 7 1.2 Z" fill="#F2C55C"/><path d="M4.3 13.5 H9.7 M4.8 15.7 H9.2" stroke="#DFE1E5" stroke-width="1.2"/></svg>
<svg style="left:480px;top:492px" width="20" height="20"><circle cx="8" cy="9.6" r="5.7" fill="#1E3322" stroke="#5FB865" stroke-width="1.3"/><path d="M8 6.6 V12.8 M6.3 6.6 H9.7 M6.1 12.8 H9.9" stroke="#5FB865" stroke-width="1.3"/><path d="M14.8 11 V2.6" stroke="#2B2B2B" stroke-width="3.2"/><path d="M14.8 10.8 V2.8 M12.6 5 L14.8 2.4 L17 5" fill="none" stroke="#E55B55" stroke-width="1.4"/></svg>
<svg style="left:500px;top:493px" width="18" height="18"><circle cx="8.9" cy="8.9" r="2.75" fill="none" stroke="#D5D7DB" stroke-width="1.3"/><path d="M11.7 5.8 V10.4 Q11.7 12.6 13.9 12.6 Q16.4 12.6 16.4 8.8 A7.5 7.5 0 1 0 12.6 15.3" fill="none" stroke="#D5D7DB" stroke-width="1.3"/></svg>
<div class="a" style="left:1870px;top:108px;width:8px;height:685px;background:#4D4D4D"></div>
<div class="a" style="left:1865px;top:305px;width:13px;height:2px;background:#C9A12D"></div>
<div class="a" style="left:1865px;top:323px;width:13px;height:2px;background:#C9A12D"></div>
<div class="a" style="left:1865px;top:340px;width:13px;height:2px;background:#C9A12D"></div>
<div class="a" style="left:1865px;top:376px;width:13px;height:2px;background:#C9A12D"></div>
<svg style="left:1808px;top:88px" width="14" height="13"><path d="M7 1.6 L12.8 11.2 Q13.2 12 12.3 12 H1.7 Q0.8 12 1.2 11.2 Z" fill="#D9A526" stroke="#D9A526" stroke-width="1.2" stroke-linejoin="round"/><path d="M7 4.6 V8.2" stroke="#2B2B2B" stroke-width="1.5"/><circle cx="7" cy="10" r="0.85" fill="#2B2B2B"/></svg>
<div class="t" style="left:1824px;top:86px;color:#B4BAC2;font-size:13px">4</div>
<svg style="left:1842px;top:92px" width="9" height="6"><path d="M0.5 5 L4.5 1 L8.5 5" fill="none" stroke="#CED0D6" stroke-width="1.1"/></svg>
<svg style="left:1863px;top:93px" width="9" height="6"><path d="M0.5 0.5 L4.5 4.5 L8.5 0.5" fill="none" stroke="#CED0D6" stroke-width="1.1"/></svg>
<div class="a" style="left:987px;top:436px;width:271px;height:35px;border:2px solid #E5262E"></div>
<div class="a" style="left:1879px;top:41px;width:1px;height:962px;background:#2B2D30"></div>
<svg style="left:1889px;top:48px" width="24" height="24"><path d="M3.2 18.4 Q5.2 16.5 5.2 13.5 V10.5 Q5.2 4.5 10.6 4.5 Q13 4.5 14.5 5.5 M16 9.5 V13.5 Q16 16.5 18 18.4 Z" fill="none" stroke="#CED0D6" stroke-width="1.3" stroke-linejoin="round"/><path d="M3.2 18.4 H18" stroke="#CED0D6" stroke-width="1.3"/><path d="M8.5 20.5 Q10.6 22 12.7 20.5 Z" fill="#CED0D6" stroke="#CED0D6" stroke-width="0.8"/><circle cx="17.5" cy="6.5" r="3.6" fill="#548AF7"/></svg>
<div class="a" style="left:1888px;top:86px;width:24px;height:1px;background:#4A4D50"></div>
<div class="a" style="left:1890px;top:94px;font-size:25px;line-height:30px;font-style:italic;color:#CED0D6">m</div>
<div class="a" style="left:0;top:1002px;width:1920px;height:1px;background:#2B2D30"></div>
<div class="a" style="left:0;top:1003px;width:1920px;height:29px;background:#3C3F41"></div>
<svg style="left:13px;top:1011px" width="10" height="10"><rect x="1" y="2" width="7" height="7" rx="1.2" fill="#25324D" stroke="#548AF7" stroke-width="1.2"/></svg>
<div class="a" style="left:26px;top:1007px;white-space:pre;font-size:13px;line-height:20px;color:#C6C8CC;transform-origin:0 0;transform:scaleX(0.9931);">xugu-shardingsphere4.1.1</div>
<div class="a" style="left:201px;top:1007px;white-space:pre;font-size:13px;line-height:20px;color:#C6C8CC;transform-origin:0 0;transform:scaleX(0.9810);">src</div>
<div class="a" style="left:242px;top:1007px;white-space:pre;font-size:13px;line-height:20px;color:#C6C8CC;transform-origin:0 0;transform:scaleX(0.9937);">main</div>
<div class="a" style="left:294px;top:1007px;white-space:pre;font-size:13px;line-height:20px;color:#C6C8CC;transform-origin:0 0;transform:scaleX(0.9644);">java</div>
<div class="a" style="left:341px;top:1007px;white-space:pre;font-size:13px;line-height:20px;color:#C6C8CC;transform-origin:0 0;transform:scaleX(0.9772);">com</div>
<div class="a" style="left:390px;top:1007px;white-space:pre;font-size:13px;line-height:20px;color:#C6C8CC;transform-origin:0 0;transform:scaleX(0.9972);">example</div>
<div class="a" style="left:463px;top:1007px;white-space:pre;font-size:13px;line-height:20px;color:#C6C8CC;transform-origin:0 0;transform:scaleX(1.0260);">shardingjdbcdemo</div>
<div class="a" style="left:597px;top:1007px;white-space:pre;font-size:13px;line-height:20px;color:#C6C8CC;transform-origin:0 0;transform:scaleX(0.9937);">demo1</div>
<div class="a" style="left:662px;top:1007px;white-space:pre;font-size:13px;line-height:20px;color:#C6C8CC;transform-origin:0 0;transform:scaleX(1.0089);">config</div>
<div class="a" style="left:742px;top:1007px;white-space:pre;font-size:13px;line-height:20px;color:#C6C8CC;transform-origin:0 0;transform:scaleX(1.0011);">UserTableRangeShardingAlgorithm</div>
<svg style="left:187px;top:1012px" width="5.5" height="9"><path d="M0.5 0.5 L4.5 4.5 L0.5 8.5" fill="none" stroke="#9A9DA1" stroke-width="1.1"/></svg>
<svg style="left:228px;top:1012px" width="5.5" height="9"><path d="M0.5 0.5 L4.5 4.5 L0.5 8.5" fill="none" stroke="#9A9DA1" stroke-width="1.1"/></svg>
<svg style="left:280px;top:1012px" width="5.5" height="9"><path d="M0.5 0.5 L4.5 4.5 L0.5 8.5" fill="none" stroke="#9A9DA1" stroke-width="1.1"/></svg>
<svg style="left:326px;top:1012px" width="5.5" height="9"><path d="M0.5 0.5 L4.5 4.5 L0.5 8.5" fill="none" stroke="#9A9DA1" stroke-width="1.1"/></svg>
<svg style="left:375px;top:1012px" width="5.5" height="9"><path d="M0.5 0.5 L4.5 4.5 L0.5 8.5" fill="none" stroke="#9A9DA1" stroke-width="1.1"/></svg>
<svg style="left:449px;top:1012px" width="5.5" height="9"><path d="M0.5 0.5 L4.5 4.5 L0.5 8.5" fill="none" stroke="#9A9DA1" stroke-width="1.1"/></svg>
<svg style="left:582px;top:1012px" width="5.5" height="9"><path d="M0.5 0.5 L4.5 4.5 L0.5 8.5" fill="none" stroke="#9A9DA1" stroke-width="1.1"/></svg>
<svg style="left:647px;top:1012px" width="5.5" height="9"><path d="M0.5 0.5 L4.5 4.5 L0.5 8.5" fill="none" stroke="#9A9DA1" stroke-width="1.1"/></svg>
<svg style="left:708px;top:1012px" width="5.5" height="9"><path d="M0.5 0.5 L4.5 4.5 L0.5 8.5" fill="none" stroke="#9A9DA1" stroke-width="1.1"/></svg>
<svg style="left:723px;top:1006px" width="16" height="20"><circle cx="7" cy="10" r="6.5" fill="#1F2D4A" stroke="#548AF7" stroke-width="1.05"/><path d="M9.3 8 A3.1 3.1 0 1 0 9.3 12.2" fill="none" stroke="#548AF7" stroke-width="1"/></svg>
<div class="a" style="left:1682px;top:1007px;white-space:pre;font-size:13px;line-height:20px;color:#C6C8CC;transform-origin:0 0;transform:scaleX(0.9451);">11:4</div>
<div class="a" style="left:1721px;top:1007px;white-space:pre;font-size:13px;line-height:20px;color:#C6C8CC;transform-origin:0 0;transform:scaleX(0.8395);">CRLF</div>
<div class="a" style="left:1765px;top:1007px;white-space:pre;font-size:13px;line-height:20px;color:#C6C8CC;transform-origin:0 0;transform:scaleX(0.9232);">UTF-8</div>
<div class="a" style="left:1819px;top:1007px;white-space:pre;font-size:13px;line-height:20px;color:#C6C8CC;transform-origin:0 0;transform:scaleX(0.9802);">4 spaces</div>
<svg style="left:1888px;top:1008px" width="16" height="16"><rect x="1.5" y="7" width="9" height="7.5" rx="1.3" fill="none" stroke="#CED0D6" stroke-width="1.2"/><path d="M8 7 V4.5 Q8 1.5 11 1.5 Q14 1.5 14 4.5 V6" fill="none" stroke="#CED0D6" stroke-width="1.2"/><rect x="5" y="9.8" width="2" height="2" fill="#CED0D6"/></svg>
<div class="a" style="left:215px;top:380px;width:251px;height:48px;border:2px solid #E5262E"></div></body></html>
